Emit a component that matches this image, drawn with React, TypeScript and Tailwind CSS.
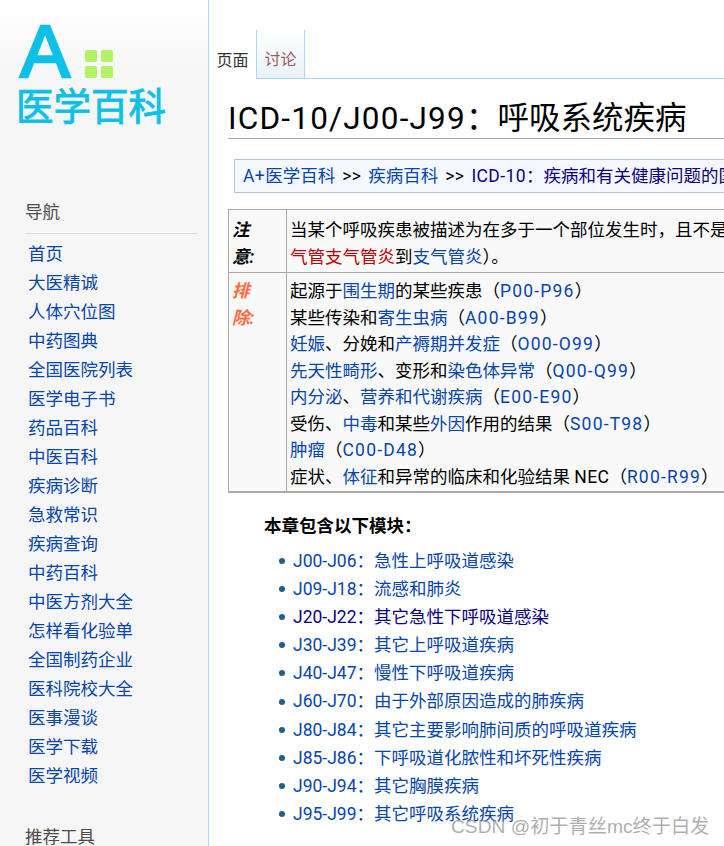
import React from "react"

const navItems = ["首页", "大医精诚", "人体穴位图", "中药图典", "全国医院列表", "医学电子书", "药品百科", "中医百科", "疾病诊断", "急救常识", "疾病查询", "中药百科", "中医方剂大全", "怎样看化验单", "全国制药企业", "医科院校大全", "医事漫谈", "医学下载", "医学视频"]

const modules = [
  ["J00-J06", "急性上呼吸道感染", false],
  ["J09-J18", "流感和肺炎", false],
  ["J20-J22", "其它急性下呼吸道感染", true],
  ["J30-J39", "其它上呼吸道疾病", false],
  ["J40-J47", "慢性下呼吸道疾病", false],
  ["J60-J70", "由于外部原因造成的肺疾病", false],
  ["J80-J84", "其它主要影响肺间质的呼吸道疾病", false],
  ["J85-J86", "下呼吸道化脓性和坏死性疾病", false],
  ["J90-J94", "其它胸膜疾病", false],
  ["J95-J99", "其它呼吸系统疾病", false],
] as const

const L = ({ children }: { children: React.ReactNode }) => <a className="text-[#0645ad]">{children}</a>
const Code = ({ children }: { children: React.ReactNode }) => <span className="tracking-[0.4px]">{children}</span>
const Range = ({ children }: { children: React.ReactNode }) => <a className="tracking-[1.2px] text-[#0645ad]">{children}</a>

const Logo = () => (
  <svg width="208" height="130" viewBox="0 0 208 130" className="block">
    <text x="20" y="77" fontSize="75" fill="#0dc0ea" stroke="#0dc0ea" strokeWidth="2.5" fontFamily="Liberation Sans, sans-serif">A</text>
    <rect x="85" y="50" width="12" height="12" rx="2" fill="#b2f266" />
    <rect x="101" y="50" width="12" height="12" rx="2" fill="#b2f266" />
    <rect x="85" y="66" width="12" height="12" rx="2" fill="#b2f266" />
    <rect x="101" y="66" width="12" height="12" rx="2" fill="#b2f266" />
    <text x="16" y="120" fontSize="37.5" fill="#0dc0ea" stroke="#0dc0ea" strokeWidth="0.9" fontFamily="Noto Sans CJK SC, sans-serif">医学百科</text>
  </svg>
)

const Sidebar = () => (
  <aside className="w-[208px] shrink-0 bg-[#f6f6f6] bg-gradient-to-b from-white to-[#f6f6f6] to-[80px]">
    <Logo />
    <div className="mt-[70px] pl-[25px] pr-[10px]">
      <div className="h-[34px] border-b border-[#dddddd] text-[17.5px] leading-[24px] text-[#4d4d4d]">导航</div>
      <ul className="mt-[6px] pl-[3px]">
        {navItems.map(n => (
          <li key={n} className="h-[29px] text-[17.5px] leading-[29px] text-[#0645ad]">{n}</li>
        ))}
      </ul>
      <div className="mt-[34px] text-[17.5px] leading-[24px] text-[#4d4d4d]">推荐工具</div>
    </div>
  </aside>
)

export default function App() {
  return (
    <div className="relative flex h-[846px] w-[724px] overflow-hidden bg-white font-['Roboto','Noto_Sans_CJK_SC',sans-serif] text-[17.5px] text-black">
      <Sidebar />
      <main className="min-w-0 flex-1 border-l border-[#a7d7f9] bg-white">
        <div className="flex h-[79px] items-end border-b border-[#a7d7f9]">
          <div className="-mb-px flex h-[49px] w-[48px] items-center justify-center border-r border-[#a7d7f9] bg-white pt-[12px] text-[16px] text-[#333333]">页面</div>
          <div className="flex h-[48px] w-[48px] items-center justify-center border-r border-[#a7d7f9] bg-gradient-to-b from-white to-[#e8f2f8] pt-[12px] text-[16px] text-[#a55858]">讨论</div>
        </div>
        <div className="pl-[19px]">
          <h1 className="mt-[19px] h-[41px] w-[600px] border-b border-[#aaaaaa] text-[31.5px] leading-[42px] whitespace-nowrap"><span className="tracking-[1.2px]">ICD-10/J00-J99</span>：呼吸系统疾病</h1>
          <div className="mt-[20px] ml-[6px] flex h-[34px] w-[700px] items-center border border-[#b0c4de] bg-[#f5f9ff] pl-[8px] whitespace-nowrap">
            <L><Code>A+</Code>医学百科</L>
            <span className="mx-[7px]"><Code>&gt;&gt;</Code></span>
            <L>疾病百科</L>
            <span className="mx-[7px]"><Code>&gt;&gt;</Code></span>
            <a className="text-[#0b0080]"><Code>ICD-10</Code>：疾病和有关健康问题的国际统计分类</a>
          </div>
          <table className="mt-[16px] w-[700px] border-collapse border border-b-2 border-[#aaaaaa] bg-[#f9f9f9] whitespace-nowrap">
            <tbody>
              <tr className="border-b border-[#aaaaaa]">
                <td className="w-[58px] border-r border-[#aaaaaa] px-[3px] pt-[7px] pb-[2px] align-top leading-[26.5px] font-bold italic">注<br />意:</td>
                <td className="px-[3px] pt-[7px] pb-[2px] leading-[26.5px]">
                  <div>当某个呼吸疾患被描述为在多于一个部位发生时，且不是特别指明</div>
                  <div><a className="text-[#ba0000]">气管支气管炎</a>到<L>支气管炎</L>）。</div>
                </td>
              </tr>
              <tr>
                <td className="border-r border-[#aaaaaa] px-[3px] pt-[5px] pb-[1px] align-top leading-[26.5px] font-bold text-[#ff6a3c] italic">排<br />除:</td>
                <td className="px-[3px] pt-[5px] pb-[1px] leading-[26.5px]">
                  <div>起源于<L>围生期</L>的某些疾患（<Range>P00-P96</Range>）</div>
                  <div>某些传染和<L>寄生虫病</L>（<Range>A00-B99</Range>）</div>
                  <div><L>妊娠</L>、分娩和<L>产褥期并发症</L>（<Range>O00-O99</Range>）</div>
                  <div><L>先天性畸形</L>、变形和<L>染色体异常</L>（<Range>Q00-Q99</Range>）</div>
                  <div><L>内分泌</L>、<L>营养和代谢疾病</L>（<Range>E00-E90</Range>）</div>
                  <div>受伤、<L>中毒</L>和某些<L>外因</L>作用的结果（<Range>S00-T98</Range>）</div>
                  <div><L>肿瘤</L>（<Range>C00-D48</Range>）</div>
                  <div>症状、<L>体征</L>和异常的临床和化验结果 <Code>NEC</Code>（<Range>R00-R99</Range>）</div>
                </td>
              </tr>
            </tbody>
          </table>
          <div className="mt-[19px] ml-[36px]">
            <p className="leading-[28px] font-bold">本章包含以下模块：</p>
            <ul className="mt-[7px] ml-[15px]">
              {modules.map(([code, title, visited]) => (
                <li key={code} className="flex h-[28.1px] items-center leading-[28.1px] whitespace-nowrap">
                  <span className="mr-[8px] h-[6px] w-[6px] rounded-full bg-[#1f5f8b]" />
                  <a className={visited ? "text-[#0b0080]" : "text-[#0645ad]"}>{code}：{title}</a>
                </li>
              ))}
            </ul>
          </div>
        </div>
      </main>
      <div className="absolute top-[815px] left-[451px] font-['Liberation_Sans','Noto_Sans_CJK_SC',sans-serif] text-[19.2px] leading-[24px] whitespace-nowrap text-[#8a8a8a]/70">CSDN @初于青丝mc终于白发</div>
    </div>
  )
}
